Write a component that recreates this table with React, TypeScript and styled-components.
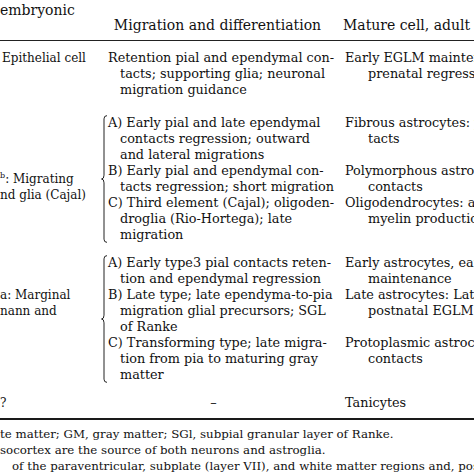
import React from "react";
import styled, { createGlobalStyle } from "styled-components";

const GlobalStyle = createGlobalStyle`
  html, body {
    margin: 0;
    padding: 0;
    background: #ffffff;
  }
  body {
    width: 474px;
    height: 474px;
    overflow: hidden;
  }
`;

const Page = styled.div`
  width: 474px;
  height: 474px;
  overflow: hidden;
  font-family: "DejaVu Serif", "Liberation Serif", serif;
  font-size: 12.8px;
  line-height: 16px;
  color: #111;
  white-space: nowrap;
`;

const HeaderRow = styled.div`
  display: grid;
  grid-template-columns: 108px 237px 1fr;
  padding-top: 2px;
  padding-bottom: 6px;
  border-bottom: 1px solid #222;
  font-size: 14px;
`;

const HeadLeft = styled.div`
  padding-bottom: 16px;
`;

const HeadMid = styled.div`
  padding-top: 15px;
  padding-right: 18px;
  text-align: center;
`;

const HeadRight = styled.div`
  padding-top: 15px;
  margin-left: -2px;
`;

const Row = styled.div<{ $pad: number; $last?: boolean }>`
  display: grid;
  grid-template-columns: 100px 1fr;
  padding-top: ${(p) => p.$pad}px;
  padding-bottom: ${(p) => (p.$last ? 7 : 0)}px;
  border-bottom: ${(p) => (p.$last ? "2px solid #1a1a1a" : "none")};
`;

const LeftCell = styled.div`
  display: flex;
  flex-direction: column;
  justify-content: center;
  font-size: 12px;
`;

const LeftLine = styled.div<{ $indent?: number }>`
  padding-left: ${(p) => p.$indent ?? 0}px;
`;

const Sup = styled.sup`
  font-size: 8px;
  line-height: 0;
`;

const Group = styled.div`
  display: flex;
`;

const BraceBox = styled.div`
  width: 8px;
  flex: none;
`;

const BraceSvg = styled.svg`
  display: block;
  width: 8px;
  height: 100%;
`;

const Items = styled.div`
  flex: 1;
  display: flex;
  flex-direction: column;
`;

const Item = styled.div`
  display: grid;
  grid-template-columns: 237px 1fr;
`;

const Mid = styled.div<{ $center?: boolean }>`
  padding-left: ${(p) => (p.$center ? 0 : 12)}px;
  text-indent: ${(p) => (p.$center ? 0 : -12)}px;
  padding-right: ${(p) => (p.$center ? 26 : 0)}px;
  text-align: ${(p) => (p.$center ? "center" : "left")};
`;

const Right = styled.div`
  padding-left: 23px;
  text-indent: -23px;
`;

const Notes = styled.div`
  padding-top: 6px;
  font-size: 11.8px;
`;

const NoteLine = styled.div<{ $indent?: number }>`
  padding-left: ${(p) => p.$indent ?? 0}px;
`;

function Brace({ show }: { show?: boolean }) {
  return (
    <BraceBox>
      {show && (
        <BraceSvg viewBox="0 0 8 100" preserveAspectRatio="none">
          <path
            d="M7 0.5 Q4 0.5 4 3 L4 47 Q4 50 1.5 50 Q4 50 4 53 L4 97 Q4 99.5 7 99.5"
            fill="none"
            stroke="#222"
            strokeWidth="1"
            vectorEffect="non-scaling-stroke"
          />
        </BraceSvg>
      )}
    </BraceBox>
  );
}

const NB = "\u00a0";

export default function App() {
  return (
    <>
      <GlobalStyle />
      <Page>
        <HeaderRow>
          <HeadLeft>embryonic</HeadLeft>
          <HeadMid>Migration and differentiation</HeadMid>
          <HeadRight>Mature cell, adult function</HeadRight>
        </HeaderRow>

        <Row $pad={9}>
          <LeftCell>
            <LeftLine $indent={2}>Epithelial cell</LeftLine>
            <LeftLine>{NB}</LeftLine>
            <LeftLine>{NB}</LeftLine>
          </LeftCell>
          <Group>
            <Brace />
            <Items>
              <Item>
                <Mid>
                  Retention pial and ependymal con-
                  <br />
                  tacts; supporting glia; neuronal
                  <br />
                  migration guidance
                </Mid>
                <Right>
                  Early EGLM maintenance,
                  <br />
                  prenatal regression
                </Right>
              </Item>
            </Items>
          </Group>
        </Row>

        <Row $pad={17}>
          <LeftCell>
            <LeftLine>{NB}</LeftLine>
            <LeftLine>
              <Sup>b</Sup>: Migrating
            </LeftLine>
            <LeftLine>nd glia (Cajal)</LeftLine>
          </LeftCell>
          <Group>
            <Brace show />
            <Items>
              <Item>
                <Mid>
                  A) Early pial and late ependymal
                  <br />
                  contacts regression; outward
                  <br />
                  and lateral migrations
                </Mid>
                <Right>
                  Fibrous astrocytes: pial con-
                  <br />
                  tacts
                </Right>
              </Item>
              <Item>
                <Mid>
                  B) Early pial and ependymal con-
                  <br />
                  tacts regression; short migration
                </Mid>
                <Right>
                  Polymorphous astrocytes: pial
                  <br />
                  contacts
                </Right>
              </Item>
              <Item>
                <Mid>
                  C) Third element (Cajal); oligoden-
                  <br />
                  droglia (Rio-Hortega); late
                  <br />
                  migration
                </Mid>
                <Right>
                  Oligodendrocytes: axonal
                  <br />
                  myelin production
                </Right>
              </Item>
            </Items>
          </Group>
        </Row>

        <Row $pad={12}>
          <LeftCell>
            <LeftLine>a: Marginal</LeftLine>
            <LeftLine>nann and</LeftLine>
            <LeftLine>{NB}</LeftLine>
            <LeftLine>{NB}</LeftLine>
          </LeftCell>
          <Group>
            <Brace show />
            <Items>
              <Item>
                <Mid>
                  A) Early type3 pial contacts reten-
                  <br />
                  tion and ependymal regression
                </Mid>
                <Right>
                  Early astrocytes, early EGLM
                  <br />
                  maintenance
                </Right>
              </Item>
              <Item>
                <Mid>
                  B) Late type; late ependyma-to-pia
                  <br />
                  migration glial precursors; SGL
                  <br />
                  of Ranke
                </Mid>
                <Right>
                  Late astrocytes: Late
                  <br />
                  postnatal EGLM
                </Right>
              </Item>
              <Item>
                <Mid>
                  C) Transforming type; late migra-
                  <br />
                  tion from pia to maturing gray
                  <br />
                  matter
                </Mid>
                <Right>
                  Protoplasmic astrocytes: vascular
                  <br />
                  contacts
                </Right>
              </Item>
            </Items>
          </Group>
        </Row>

        <Row $pad={12} $last>
          <LeftCell>
            <LeftLine>?</LeftLine>
          </LeftCell>
          <Group>
            <Brace />
            <Items>
              <Item>
                <Mid $center>–</Mid>
                <Right>Tanicytes</Right>
              </Item>
            </Items>
          </Group>
        </Row>

        <Notes>
          <NoteLine>te matter; GM, gray matter; SGl, subpial granular layer of Ranke.</NoteLine>
          <NoteLine>socortex are the source of both neurons and astroglia.</NoteLine>
          <NoteLine $indent={12}>
            of the paraventricular, subplate (layer VII), and white matter regions and, postnatally
          </NoteLine>
        </Notes>
      </Page>
    </>
  );
}
